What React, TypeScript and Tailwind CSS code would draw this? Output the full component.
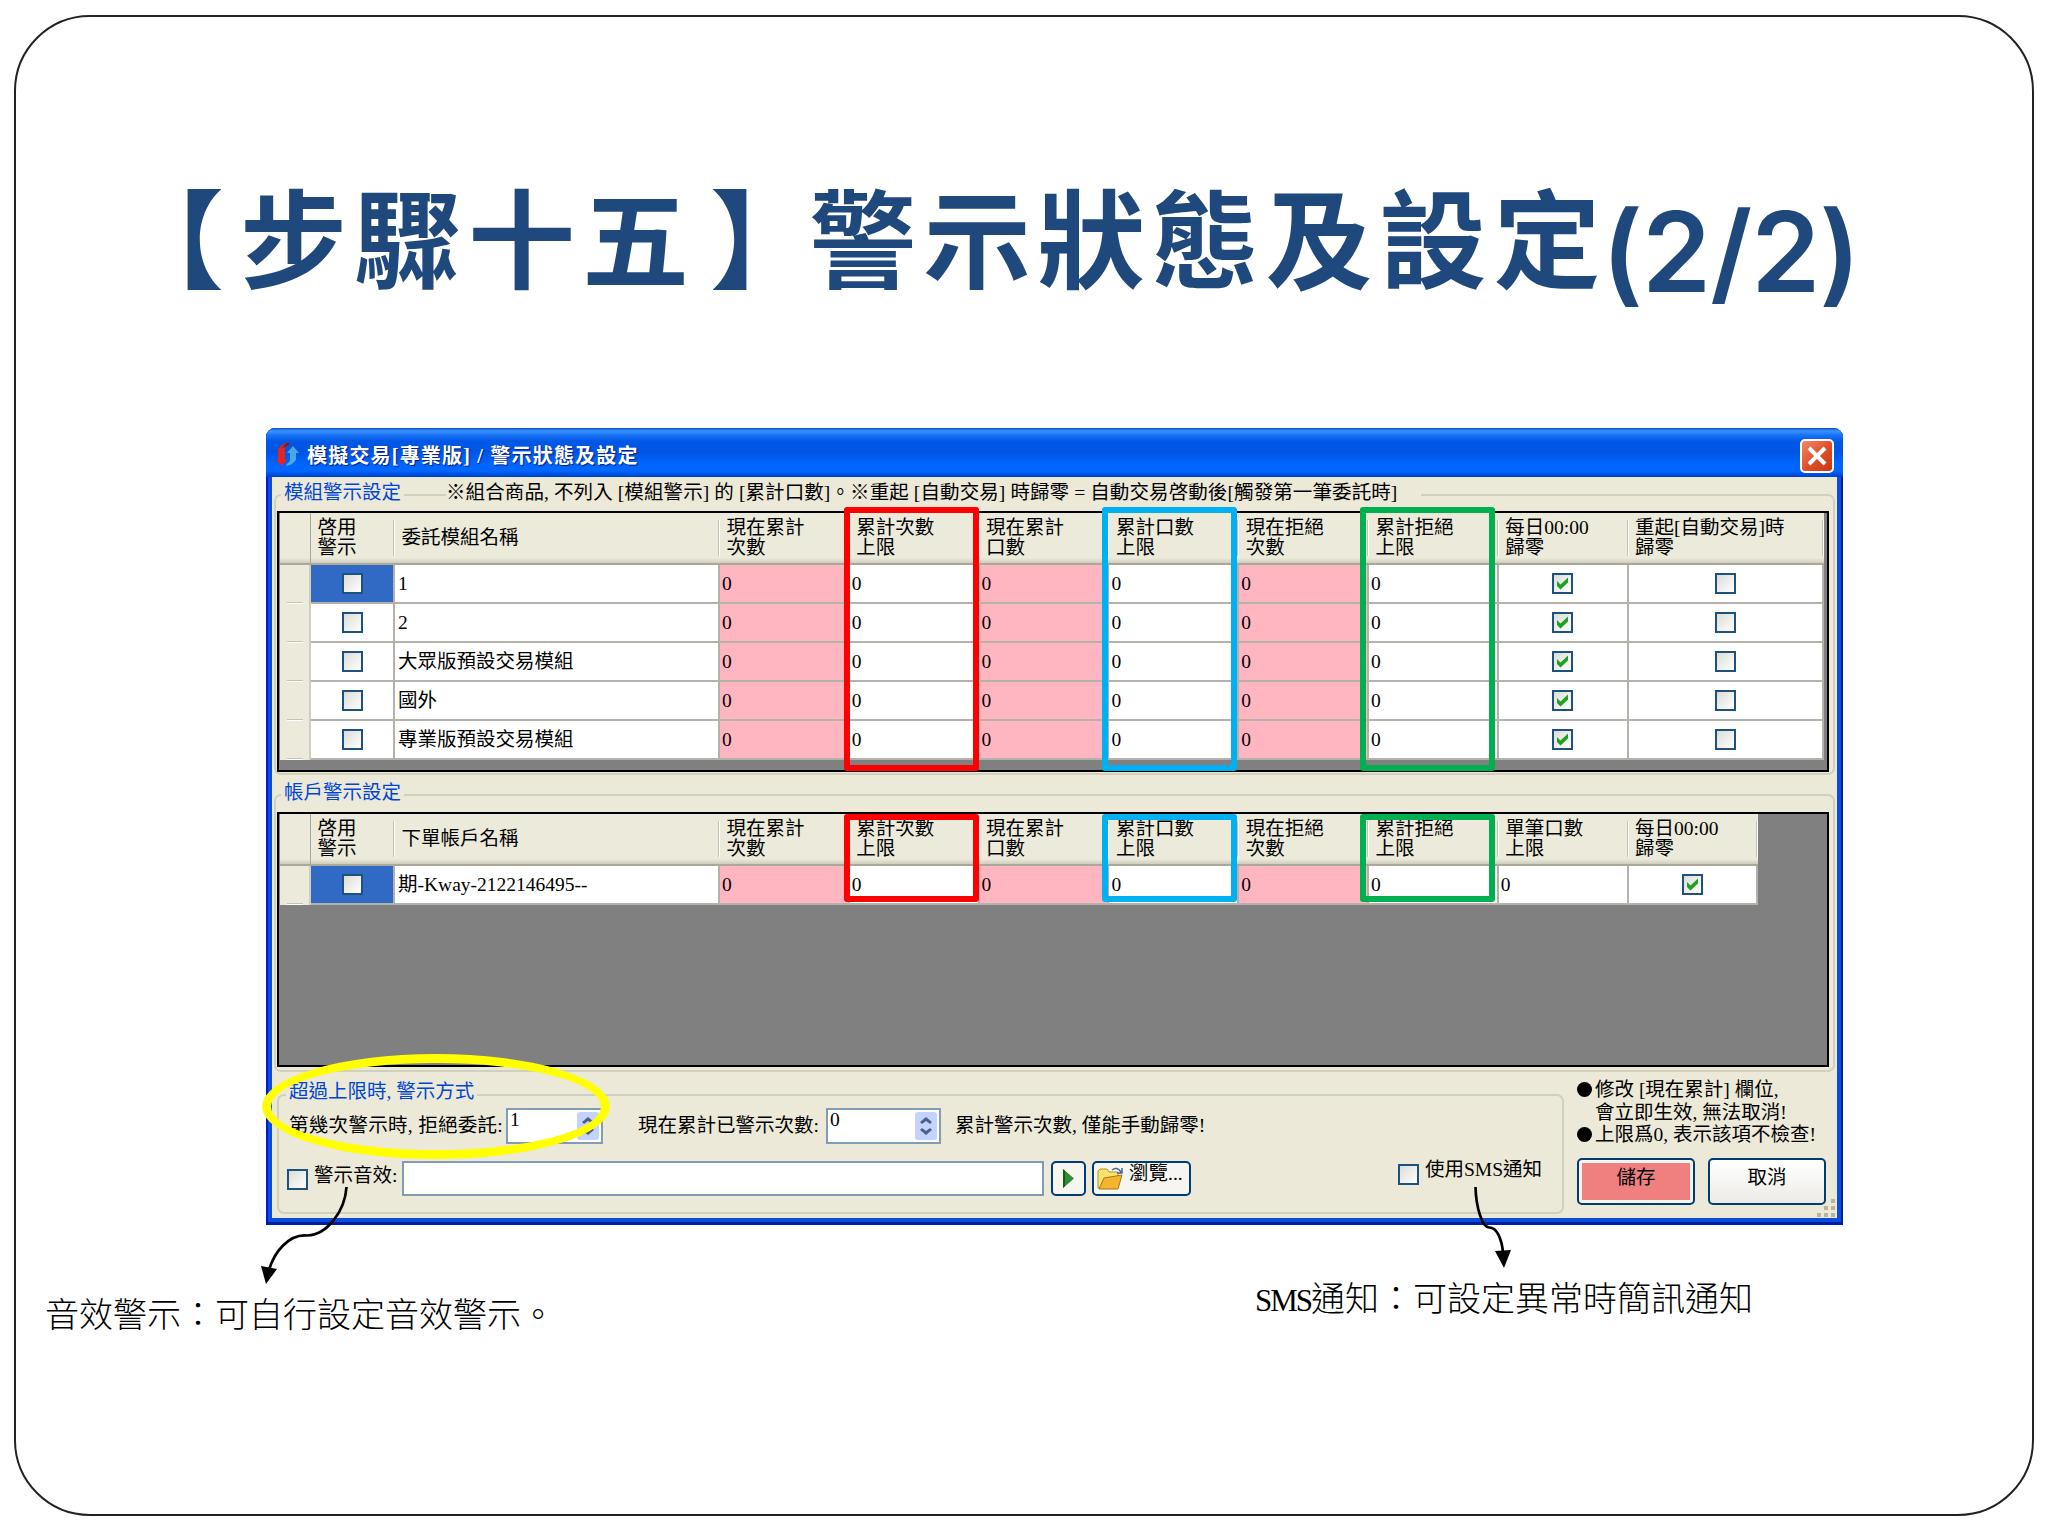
import { ReactNode } from "react";
import clsx from "clsx";

type Column = {
  label: string[];
  kind: "check" | "name" | "count" | "limit";
  width: string;
  checked?: boolean;
};

const COUNT_COLUMNS: Column[] = [
  { label: ["現在累計", "次數"], kind: "count", width: "w-[129.8px]" },
  { label: ["累計次數", "上限"], kind: "limit", width: "w-[129.8px]" },
  { label: ["現在累計", "口數"], kind: "count", width: "w-[129.8px]" },
  { label: ["累計口數", "上限"], kind: "limit", width: "w-[129.8px]" },
  { label: ["現在拒絕", "次數"], kind: "count", width: "w-[129.8px]" },
  { label: ["累計拒絕", "上限"], kind: "limit", width: "w-[129.8px]" },
];

const MODULE_COLUMNS: Column[] = [
  { label: ["啓用", "警示"], kind: "check", width: "w-[84px]" },
  { label: ["委託模組名稱"], kind: "name", width: "w-[325px]" },
  ...COUNT_COLUMNS,
  { label: ["每日00:00", "歸零"], kind: "check", width: "w-[129.8px]", checked: true },
  { label: ["重起[自動交易]時", "歸零"], kind: "check", width: "w-[195px]" },
];

const ACCOUNT_COLUMNS: Column[] = [
  { label: ["啓用", "警示"], kind: "check", width: "w-[84px]" },
  { label: ["下單帳戶名稱"], kind: "name", width: "w-[325px]" },
  ...COUNT_COLUMNS,
  { label: ["單筆口數", "上限"], kind: "limit", width: "w-[129.8px]" },
  { label: ["每日00:00", "歸零"], kind: "check", width: "w-[129.8px]", checked: true },
];

const MODULES = ["1", "2", "大眾版預設交易模組", "國外", "專業版預設交易模組"];
const ACCOUNTS = ["期-Kway-2122146495--"];

function Checkbox({ checked }: { checked?: boolean }) {
  return (
    <span className="flex h-[21px] w-[21px] shrink-0 items-center justify-center border-2 border-[#1c5180] bg-linear-to-br from-[#dcdcd7] to-white">
      {checked && (
        <svg width="13" height="13" viewBox="0 0 13 13">
          <path d="M1 4v5l3.500 3.500L12 5.500V.5L4.500 7.500z" fill="#21a121" />
        </svg>
      )}
    </span>
  );
}

function Grid({ columns, rows }: { columns: Column[]; rows: string[] }) {
  return (
    <div className="flex flex-col items-start">
      <div className="flex h-[52px] border-b-2 border-[#aca899] bg-linear-to-b from-[#ebeadb] from-90% to-[#d0cdbd]">
        <div className="w-[31px] border-r border-[#aca899]" />
        {columns.map((col, i) => (
          <div key={i} className={clsx("flex items-center", col.width)}>
            <div className="flex-1 whitespace-nowrap pb-px pl-[6.5px] leading-[19.5px]">
              {col.label.map((line) => (
                <div key={line}>{line}</div>
              ))}
            </div>
            <div className="h-9 w-[2px] border-r border-white bg-[#c5c2b2]" />
          </div>
        ))}
      </div>
      {rows.map((name, r) => (
        <div key={name} className="flex h-[39px]">
          <div className="flex w-[31px] items-end border-r-2 border-[#d0cdbd] bg-[#ebeadb] pl-[7px]">
            <div className="h-[2px] w-4 border-b border-white bg-[#c5c2b2]" />
          </div>
          {columns.map((col, c) => (
            <div
              key={c}
              className={clsx(
                "flex items-center border-b-2 border-r-2 border-[#b5b2ab]",
                col.width,
                col.kind === "check" && "justify-center",
                col.kind === "count" && "bg-[#ffb6c1]",
                col.kind !== "count" && (r === 0 && c === 0 ? "bg-[#316ac5]" : "bg-white"),
              )}
            >
              {col.kind === "check" && <Checkbox checked={col.checked} />}
              {col.kind === "name" && <span className="pl-[3px]">{name}</span>}
              {(col.kind === "count" || col.kind === "limit") && <span className="pl-[2px]">0</span>}
            </div>
          ))}
        </div>
      ))}
    </div>
  );
}

function Legend({ children }: { children: ReactNode }) {
  return <span className="bg-[#ece9d8] px-[3px] text-[#0046d5]">{children}</span>;
}

function Spinner({ value, className }: { value: string; className: string }) {
  return (
    <div className={clsx("flex h-[36px] justify-between border-2 border-[#7f9db9] bg-white p-[2px]", className)}>
      <span className="leading-[16px]">{value}</span>
      <span className="flex w-[22px] flex-col items-center justify-around rounded-[3px] bg-[#c3d3fd] py-[3px]">
        <svg width="12" height="7" viewBox="0 0 12 7">
          <path d="M6 0l6 5-2 2-4-3-4 3-2-2z" fill="#4d6185" />
        </svg>
        <svg width="12" height="7" viewBox="0 0 12 7">
          <path d="M6 7l6-5-2-2-4 3-4-3-2 2z" fill="#4d6185" />
        </svg>
      </span>
    </div>
  );
}

function TitleBar() {
  return (
    <div className="flex h-[49px] items-center rounded-t-[9px] bg-[linear-gradient(to_bottom,#0a4fc4_0,#3a93ff_3px,#1b74f5_7px,#0058e6_13px,#0054e5_24px,#0066ff_36px,#0066ff_43px,#0040c8_49px)] pl-[10px] pr-[9px]">
      <svg className="mt-[4px]" width="23" height="24" viewBox="0 0 23 24">
        <path d="M6 2l4-2h4l-1 2-4 2v13h2l-5 6-6-6h2V6z" fill="#e8231d" />
        <path d="M10 0h4l-1 2-4 2-3 1z" fill="#8c1512" />
        <path d="M17 3l6 7h-3v7l-4 4-5 2-1-1 4-4V10h-3z" fill="#4aa8e8" />
      </svg>
      <span className="flex-1 pl-[8px] pt-[6px] text-[20px] font-bold tracking-[1.2px] text-white [text-shadow:1px_1px_1px_#0a1f7a]">
        模擬交易[專業版] / 警示狀態及設定
      </span>
      <span className="mt-[6px] flex h-[34px] w-[34px] items-center justify-center rounded-[5px] border-2 border-white bg-linear-to-br from-[#ee8a6c] via-[#e0502c] to-[#c8360c]">
        <svg width="20" height="20" viewBox="0 0 20 20">
          <path d="M2 2l16 16M18 2L2 18" stroke="white" strokeWidth="4" />
        </svg>
      </span>
    </div>
  );
}

function SettingsPanel() {
  return (
    <div className="mt-[22px] h-[120px] w-[1287px] rounded-[7px] border-2 border-[#d0d0bf]">
      <div className="-mt-[18px] flex h-[30px] items-center pb-[2px] pl-[7px]">
        <Legend>超過上限時, 警示方式</Legend>
      </div>
      <div className="flex h-[36px] items-center pl-[10px]">
        <span className="w-[217px] whitespace-nowrap tracking-[0.3px]">第幾次警示時, 拒絕委託:</span>
        <Spinner value="1" className="w-[97px]" />
        <span className="ml-[35px] w-[188px]">現在累計已警示次數:</span>
        <Spinner value="0" className="w-[115px]" />
        <span className="ml-[14px]">累計警示次數, 僅能手動歸零!</span>
      </div>
      <div className="mt-[17px] flex h-[35px] items-center">
        <div className="ml-[8px] mt-[2px]">
          <Checkbox />
        </div>
        <span className="ml-[6px] w-[88px] pb-[5px]">警示音效:</span>
        <div className="h-[35px] w-[642px] border-2 border-[#7f9db9] bg-white" />
        <div className="ml-[7px] flex h-[35px] w-[35px] items-center justify-center rounded-[5px] border-2 border-[#003c74] bg-[#f6f5f0]">
          <svg width="11" height="19" viewBox="0 0 11 19">
            <path d="M0 0l11 9.500-11 9.500z" fill="#2f8c2f" />
            <path d="M0 0v19l2-2V2z" fill="#135c13" />
          </svg>
        </div>
        <div className="ml-[6px] flex h-[35px] w-[99px] items-center rounded-[5px] border-2 border-[#003c74] bg-[#f6f5f0] pl-[3px]">
          <svg width="27" height="23" viewBox="0 0 27 23">
            <path d="M1 4l2-2h7l2 3h9v5L5 21H1z" fill="#f9e46b" stroke="#b8902c" />
            <path d="M7 11l18-3-4 14H2z" fill="#f5b52e" stroke="#a87518" />
            <path d="M15 3q5-4 9 2m1-4v5h-5" fill="none" stroke="#41659c" strokeWidth="1.500" />
          </svg>
          <span className="pb-[9px] pl-[5px]">瀏覽...</span>
        </div>
        <div className="ml-[207px] -mt-[8px]">
          <Checkbox />
        </div>
        <span className="ml-[6px] pb-[17px]">使用SMS通知</span>
      </div>
    </div>
  );
}

function Notes() {
  return (
    <div className="whitespace-pre leading-[22.7px]">
      <div className="flex">
        <span className="mr-[3px] mt-[3px] h-[15px] w-[15px] rounded-full bg-black" />
        修改 [現在累計] 欄位,
      </div>
      <div className="pl-[18px]">會立即生效, 無法取消!</div>
      <div className="flex">
        <span className="mr-[3px] mt-[3px] h-[15px] w-[15px] rounded-full bg-black" />
        上限爲0, 表示該項不檢查!
      </div>
    </div>
  );
}

function Dialog() {
  return (
    <div className="relative flex h-[797px] w-[1577px] flex-col rounded-t-[9px] bg-[#0a4ce0] text-[19.5px] leading-[20px] text-black shadow-[inset_-2px_-3px_0_#001ea0,inset_2px_0_0_#0019cf]">
      <TitleBar />
      <div className="mx-[6px] h-[741px] bg-[#ece9d8] px-[2px]">
        <div className="h-[299px] pt-[17px]">
          <div className="h-[281px] rounded-[7px] border-2 border-[#d0d0bf] px-[1px]">
            <div className="-mt-[17px] flex h-[32px] items-center whitespace-pre pb-[5px] pl-[4px]">
              <Legend>模組警示設定</Legend>
              <span className="ml-[42px] w-[975px] bg-[#ece9d8] tracking-[0.1px]">
                ※組合商品, 不列入 [模組警示] 的 [累計口數]。※重起 [自動交易] 時歸零 = 自動交易啓動後[觸發第一筆委託時]
              </span>
            </div>
            <div className="h-[261px] w-[1552px] border-2 border-black bg-[#808080] pl-px">
              <Grid columns={MODULE_COLUMNS} rows={MODULES} />
            </div>
          </div>
        </div>
        <div className="mt-[18px] h-[278px] rounded-[7px] border-2 border-[#d0d0bf] px-[1px]">
          <div className="-mt-[17px] flex h-[33px] items-center pb-[6px] pl-[4px]">
            <Legend>帳戶警示設定</Legend>
          </div>
          <div className="h-[255px] w-[1552px] border-2 border-black bg-[#808080] pl-px">
            <Grid columns={ACCOUNT_COLUMNS} rows={ACCOUNTS} />
          </div>
        </div>
        <div className="flex pl-[3px]">
          <SettingsPanel />
          <div className="ml-[13px] pt-[7px]">
            <Notes />
            <div className="mt-[11px] flex gap-[13px]">
              <div className="flex h-[47px] w-[118px] justify-center rounded-[5px] border-2 border-[#003c74] bg-[#f6f5f0] p-[3px]">
                <span className="flex-1 bg-[#f08080] pt-[5px] text-center">儲存</span>
              </div>
              <div className="flex h-[47px] w-[118px] justify-center rounded-[5px] border-2 border-[#003c74] bg-linear-to-b from-white to-[#ecebe5] pt-[8px]">
                取消
              </div>
            </div>
          </div>
        </div>
      </div>
      <svg className="absolute bottom-[8px] right-[8px]" width="18" height="18" viewBox="0 0 18 18">
        <path d="M14 0h4v4h-4zM14 7h4v4h-4zM7 7h4v4H7zM14 14h4v4h-4zM7 14h4v4H7zM0 14h4v4H0z" fill="#b8b4a2" />
      </svg>
    </div>
  );
}

export default function App() {
  return (
    <div className="relative h-[1536px] w-[2048px] overflow-hidden bg-white pl-[14px] pt-[15px] font-['Liberation_Serif','Noto_Sans_CJK_TC',sans-serif]">
      <div className="h-[1501px] w-[2020px] rounded-[76px] border-2 border-[#222222]">
        <h1 className="ml-[110px] mt-[132px] flex h-[170px] items-center whitespace-nowrap font-['Noto_Sans_CJK_TC',sans-serif] text-[107px] font-bold tracking-[7px] text-[#1f497d]">
          <span className="-ml-[9px] mr-[9px]">【</span>步驟十五
          <span className="ml-[14px] mr-[39px] [font-feature-settings:'halt']">】</span>警示狀態及設定
          <span className="-ml-[6px] pt-[36px] font-['Inter',sans-serif] text-[111px] font-semibold tracking-[-1px]">
            (2/2)
          </span>
        </h1>
        <div className="ml-[250px] mt-[109px]">
          <Dialog />
        </div>
        <div className="ml-[29px] flex items-start justify-between text-[34px] font-light leading-[40px]">
          <p className="mt-[71px]">音效警示：可自行設定音效警示。</p>
          <p className="mr-[279px] mt-[55px]">
            <span className="text-[31px] tracking-[-2px]">SMS</span>
            <span>通知：可設定異常時簡訊通知</span>
          </p>
        </div>
      </div>

      {/* callouts drawn over the dialog */}
      <div className="absolute left-[844px] top-[507px] h-[264px] w-[135px] rounded-[3px] border-[6px] border-[#ff0000]" />
      <div className="absolute left-[1102px] top-[507px] h-[264px] w-[135px] rounded-[3px] border-[6px] border-[#00b0f0]" />
      <div className="absolute left-[1360px] top-[507px] h-[264px] w-[135px] rounded-[3px] border-[6px] border-[#00b050]" />
      <div className="absolute left-[844px] top-[814px] h-[88px] w-[135px] rounded-[3px] border-[6px] border-[#ff0000]" />
      <div className="absolute left-[1102px] top-[814px] h-[88px] w-[135px] rounded-[3px] border-[6px] border-[#00b0f0]" />
      <div className="absolute left-[1360px] top-[814px] h-[88px] w-[135px] rounded-[3px] border-[6px] border-[#00b050]" />
      <div className="absolute left-[262px] top-[1054px] h-[105px] w-[348px] rounded-[50%] border-[9px] border-[#ffff00]" />
      <svg className="absolute left-[250px] top-[1180px]" width="110" height="110" viewBox="0 0 110 110">
        <path d="M96.500 7C95 30 78 55 57 55.500C38 54 24 73 19 90" fill="none" stroke="black" strokeWidth="2.700" />
        <path d="M11 86l16 3-11 15z" />
      </svg>
      <svg className="absolute left-[1465px] top-[1180px]" width="60" height="92" viewBox="0 0 60 92">
        <path d="M10.500 7C11 27 17 47 24 47.500C32 47 37 60 38 73" fill="none" stroke="black" strokeWidth="2.700" />
        <path d="M30 71l16-1-7 18z" />
      </svg>
    </div>
  );
}
